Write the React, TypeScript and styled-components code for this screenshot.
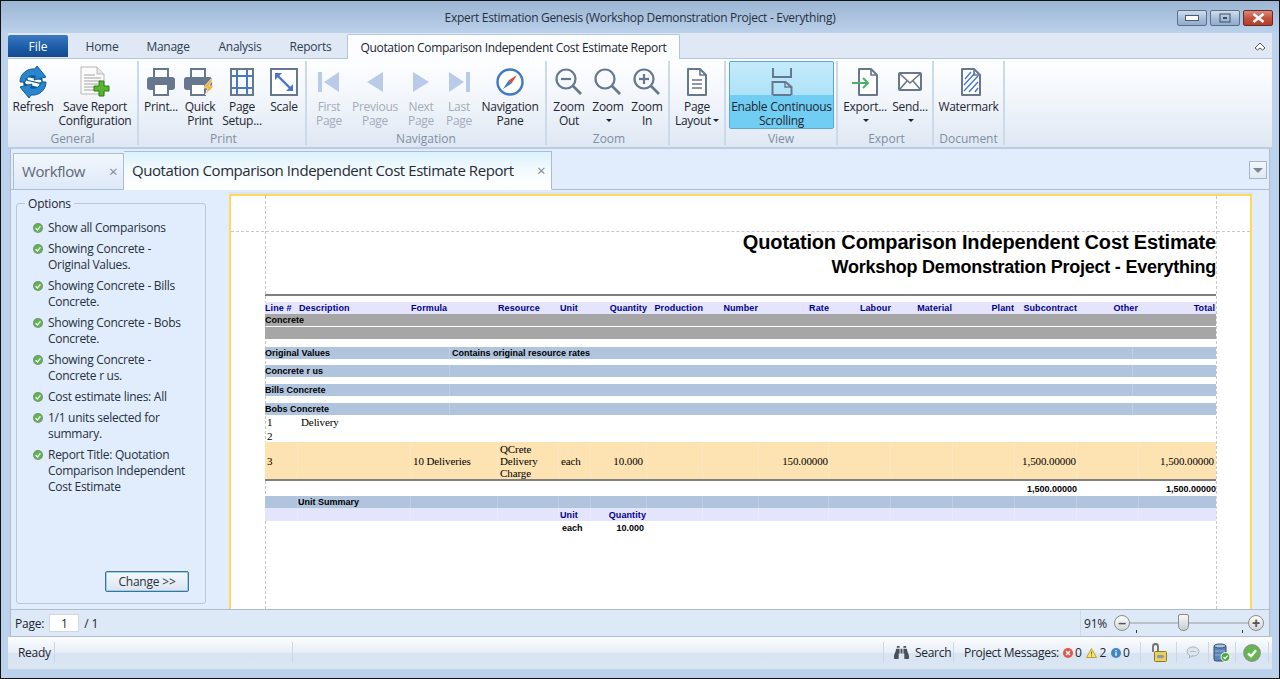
import { ReactNode } from 'react';
import styled, { createGlobalStyle } from 'styled-components';
import { FaBinoculars } from 'react-icons/fa';

const SLATE = '#67778d';
const BLUE = '#4a76c6';
const DIM = '#b9cbe8';

const GlobalStyle = createGlobalStyle`
  html, body { margin: 0; padding: 0; background: #000; }
  body { font-family: "Open Sans", "Noto Sans", sans-serif; font-size: 12px; color: #1e2530; }
  * { box-sizing: border-box; }
`;

const Window = styled.div`
  width: 1280px;
  height: 679px;
  border: 1px solid #111;
  background: #bcd2ec;
  display: flex;
  flex-direction: column;
  overflow: hidden;
`;

const TitleBar = styled.div`
  height: 32px;
  flex: none;
  position: relative;
  display: flex;
  align-items: center;
  justify-content: center;
  background: linear-gradient(#9bb5d3, #bbd1eb);
  font-size: 12px;
  letter-spacing: -0.3px;
  color: #26303c;
`;

const WindowControls = styled.div`
  position: absolute;
  right: 6px;
  top: 9px;
  display: flex;
  gap: 3px;
`;

const WinButton = styled.div<{ $close?: boolean }>`
  width: 30px;
  height: 16px;
  border: 1px solid ${(p) => (p.$close ? '#6d2a22' : '#5d6f86')};
  border-radius: 2px;
  display: flex;
  align-items: center;
  justify-content: center;
  background: ${(p) =>
    p.$close
      ? 'linear-gradient(#d98a7c, #c5523f 50%, #b33c2b)'
      : 'linear-gradient(#cfdeef, #a9c0dc 50%, #8fabcd)'};
`;

const Content = styled.div`
  flex: 1;
  min-height: 0;
  padding: 0 7px 8px;
  display: flex;
  flex-direction: column;
`;

const TabRow = styled.div`
  height: 26px;
  flex: none;
  display: flex;
  align-items: flex-end;
  position: relative;
  background: #dfe8f4;
  border-bottom: 1px solid #b4c6dc;
`;

const FileTab = styled.div`
  width: 60px;
  height: 22px;
  margin-bottom: 1px;
  border-radius: 2px 2px 0 0;
  background: linear-gradient(#3c79c0, #1c5ca8 55%, #14498e);
  color: #fff;
  display: flex;
  align-items: center;
  justify-content: center;
`;

const MenuTab = styled.div<{ $w: number; $shift?: number }>`
  width: ${(p) => p.$w}px;
  height: 24px;
  padding-right: ${(p) => p.$shift || 0}px;
  display: flex;
  align-items: center;
  justify-content: center;
  letter-spacing: -0.25px;
  color: #2d3d52;
`;

const ActiveMenuTab = styled.div`
  width: 333px;
  height: 25px;
  margin-bottom: -1px;
  border: 1px solid #b4c6dc;
  border-bottom: none;
  border-radius: 2px 2px 0 0;
  background: #fbfdff;
  display: flex;
  align-items: center;
  justify-content: center;
  letter-spacing: -0.33px;
`;

const Collapse = styled.div`
  position: absolute;
  right: 6px;
  top: 7px;
  width: 12px;
  height: 12px;
`;

const Ribbon = styled.div`
  height: 90px;
  flex: none;
  display: flex;
  background: linear-gradient(#fdfeff, #f2f6fb 45%, #dee7f3);
  border-bottom: 2px solid #bccce0;
`;

const Group = styled.div<{ $w: number; $pad?: number }>`
  width: ${(p) => p.$w}px;
  margin-top: 2px;
  margin-bottom: 2px;
  padding-left: ${(p) => p.$pad || 0}px;
  border-right: 2px solid #ccd9e9;
  display: flex;
  flex-direction: column;
`;

const GroupButtons = styled.div`
  height: 68px;
  display: flex;
`;

const GroupLabel = styled.div`
  height: 14px;
  margin-top: 3px;
  line-height: 14px;
  text-align: center;
  color: #7f8ea3;
`;

const RibbonButton = styled.div<{ $w: number; $on?: boolean; $off?: boolean }>`
  width: ${(p) => p.$w}px;
  height: 68px;
  padding-top: 3px;
  display: flex;
  flex-direction: column;
  align-items: center;
  text-align: center;
  line-height: 14px;
  letter-spacing: -0.28px;
  white-space: nowrap;
  color: ${(p) => (p.$off ? '#a4acb8' : '#1e2530')};
  ${(p) =>
    p.$on &&
    `
    border: 1px solid #5ba8d4;
    border-radius: 2px;
    background: linear-gradient(#c4ebfb, #aee2f8 50%, #72cdf3 50%, #72cdf3);
    padding-top: 2px;
    margin-left: 3px;
  `}
`;

const IconSlot = styled.div`
  height: 36px;
  flex: none;
  display: flex;
  align-items: center;
  justify-content: center;
`;

const ButtonLabel = styled.div`
  line-height: 14px;
`;

const Caret = styled.span`
  display: inline-block;
  width: 0;
  height: 0;
  margin: 0 0 2px 2px;
  vertical-align: middle;
  border-left: 3px solid transparent;
  border-right: 3px solid transparent;
  border-top: 3px solid #222;
`;

const DocArea = styled.div`
  flex: 1;
  min-height: 0;
  margin: 0 2px;
  border-left: 1px solid #aebccd;
  border-right: 1px solid #aebccd;
  background: #e1edfd;
  display: flex;
  flex-direction: column;
`;

const DocTabs = styled.div`
  height: 41px;
  flex: none;
  padding: 2px 0 0 2px;
  display: flex;
  align-items: flex-end;
  position: relative;
  border-bottom: 1px solid #aebccd;
`;

const DocTab = styled.div<{ $active?: boolean; $w: number }>`
  width: ${(p) => p.$w}px;
  height: ${(p) => (p.$active ? 39 : 37)}px;
  margin-bottom: -1px;
  padding: 0 3px 2px 8px;
  display: flex;
  align-items: center;
  justify-content: space-between;
  white-space: nowrap;
  font-size: 15px;
  letter-spacing: -0.43px;
  color: ${(p) => (p.$active ? '#252c36' : '#5f6975')};
  border: 1px solid #aebccd;
  border-bottom: ${(p) => (p.$active ? '1px solid #fff' : '1px solid #aebccd')};
  border-left: ${(p) => (p.$active ? 'none' : '1px solid #aebccd')};
  background: ${(p) =>
    p.$active ? 'linear-gradient(#dcf2fc, #f6fbfe 55%, #fff)' : 'linear-gradient(#f2f7fd, #dde9f8)'};
`;

const CloseMark = styled.span`
  width: 14px;
  text-align: center;
  font-size: 15px;
  color: #7d8895;
`;

const TabMenu = styled.div`
  position: absolute;
  right: 2px;
  top: 12px;
  width: 18px;
  height: 18px;
  border: 1px solid #a8b5c4;
  background: linear-gradient(#f3f7fc, #dfe8f3);
  display: flex;
  align-items: center;
  justify-content: center;

  &::after {
    content: '';
    border-left: 5px solid transparent;
    border-right: 5px solid transparent;
    border-top: 5px solid #7b8794;
  }
`;

const Main = styled.div`
  flex: 1;
  min-height: 0;
  display: flex;
  padding: 4px 17px 0 5px;
  gap: 23px;
`;

const OptionsBox = styled.div`
  width: 190px;
  height: 401px;
  margin-top: 9px;
  flex: none;
  position: relative;
  padding: 16px 10px 12px 16px;
  border: 1px solid #bac7d6;
  border-radius: 3px;
  display: flex;
  flex-direction: column;
  gap: 5px;
`;

const OptionsLegend = styled.div`
  position: absolute;
  left: 8px;
  top: -8px;
  padding: 0 3px;
  line-height: 16px;
  background: #e1edfd;
  letter-spacing: -0.2px;
`;

const OptionItem = styled.div`
  display: flex;
  gap: 5px;
  line-height: 16px;
  letter-spacing: -0.28px;
  color: #27303c;

  svg {
    flex: none;
    margin-top: 3px;
  }
`;

const ChangeButton = styled.button`
  position: absolute;
  right: 16px;
  bottom: 11px;
  width: 84px;
  height: 21px;
  padding: 0;
  border: 1px solid #4a6f8e;
  border-radius: 2px;
  background: linear-gradient(#f4f8fc, #dbe5f0);
  box-shadow: inset 0 0 0 1px #8fd3f2;
  font: inherit;
  letter-spacing: -0.2px;
  color: #27303c;
`;

const Page = styled.div`
  flex: 1;
  min-width: 0;
  position: relative;
  overflow: hidden;
  padding: 34px 34px 0;
  border: 2px solid #ffd95c;
  border-bottom: none;
  background: #fff;
  box-shadow: 0 -2px 0 #d9e4f6;
`;

const MarginV = styled.div<{ $side: 'left' | 'right' }>`
  position: absolute;
  top: 0;
  bottom: 0;
  ${(p) => p.$side}: ${(p) => (p.$side === 'left' ? 34 : 33)}px;
  border-left: 1px dashed #c8c8c8;
`;

const MarginH = styled.div`
  position: absolute;
  left: 0;
  right: 0;
  top: 35px;
  border-top: 1px dashed #c8c8c8;
`;

const ReportTitle = styled.div`
  position: relative;
  height: 24px;
  text-align: right;
  font: bold 20px/24px "Liberation Sans", Arial, sans-serif;
  letter-spacing: -0.15px;
  color: #000;
`;

const ReportSubtitle = styled.div`
  position: relative;
  margin-top: 3px;
  text-align: right;
  font: bold 18px/20px "Liberation Sans", Arial, sans-serif;
  letter-spacing: -0.24px;
  color: #000;
`;

const Rule = styled.div<{ $top?: number }>`
  position: relative;
  height: 2px;
  margin-top: ${(p) => p.$top || 0}px;
  background: #7f7f7f;
`;

const COLUMNS = '33px 113px 87px 61px 32px 56px 56px 56px 70px 62px 62px 62px 62px 62px 78px';
const BANDS = '185px 683px 84px';

const Row = styled.div<{ $cols?: string; $h: number; $bg?: string; $gap?: number }>`
  position: relative;
  display: grid;
  grid-template-columns: ${(p) => p.$cols || COLUMNS};
  height: ${(p) => p.$h}px;
  margin-top: ${(p) => p.$gap || 0}px;
  background: ${(p) => p.$bg || 'transparent'};
`;

const Cell = styled.div<{ $right?: boolean; $pad?: number; $line?: boolean; $kind?: 'head' | 'bold' | 'serif' }>`
  display: flex;
  align-items: center;
  justify-content: ${(p) => (p.$right ? 'flex-end' : 'flex-start')};
  padding: ${(p) => (p.$right ? `0 ${p.$pad || 0}px 0 0` : `0 0 0 ${p.$pad || 0}px`)};
  white-space: nowrap;
  min-width: 0;
  border-right: ${(p) => (p.$line ? '1px solid rgba(255, 255, 255, 0.18)' : 'none')};
  color: ${(p) => (p.$kind === 'head' ? '#00008b' : '#000')};
  font: ${(p) =>
    p.$kind === 'serif'
      ? '11px/12px "Liberation Serif", "Times New Roman", serif'
      : 'bold 9px/12px "Liberation Sans", Arial, sans-serif'};
  letter-spacing: ${(p) => (p.$kind === 'head' ? '0.1px' : p.$kind === 'serif' ? '-0.1px' : '0')};
`;

const StackedText = styled.div`
  white-space: nowrap;
`;

const PageBar = styled.div`
  height: 28px;
  flex: none;
  display: flex;
  align-items: center;
  padding: 0 5px 0 4px;
  border-top: 1px solid #aebccd;
  border-bottom: 1px solid #aebccd;
  background: #dde9f7;
  letter-spacing: -0.2px;
`;

const PageInput = styled.div`
  width: 30px;
  height: 18px;
  margin: 0 5px;
  border: 1px solid #cdd8e5;
  background: #fff;
  display: flex;
  align-items: center;
  justify-content: center;
`;

const ZoomWrap = styled.div`
  margin-left: auto;
  height: 100%;
  display: flex;
  align-items: center;
  border-left: 1px solid #cdd9e8;
  padding-left: 3px;
`;

const ZoomLabel = styled.div`
  width: 30px;
`;

const ZoomCircle = styled.div`
  width: 16px;
  height: 16px;
  flex: none;
  border: 1px solid #8c8c8c;
  border-radius: 50%;
  background: linear-gradient(#fdfdfd, #d3d6da);
  display: flex;
  align-items: center;
  justify-content: center;
  font: bold 14px/14px "Liberation Sans", Arial, sans-serif;
  color: #555;
`;

const ZoomTrack = styled.div`
  width: 118px;
  height: 2px;
  position: relative;
  background: #b9c2cc;
`;

const ZoomThumb = styled.div`
  position: absolute;
  left: 48px;
  top: -8px;
  width: 11px;
  height: 17px;
  border: 1px solid #8c8c8c;
  border-radius: 2px 2px 5px 5px;
  background: linear-gradient(#f8f8f8, #c9ccd0);
`;

const ZoomTick = styled.div<{ $left: number }>`
  position: absolute;
  left: ${(p) => p.$left}px;
  top: 8px;
  width: 1px;
  height: 3px;
  background: #333;
`;

const StatusBar = styled.div`
  height: 33px;
  flex: none;
  display: flex;
  align-items: stretch;
  padding: 2px 3px 3px 0;
  background: linear-gradient(#fcfdfe, #e7eef7 50%, #d8e4f2 50%, #dbe6f3);
  border-bottom: 1px solid #c5d5e8;
  letter-spacing: -0.3px;
`;

const StatusCell = styled.div<{ $w?: number; $grow?: boolean; $pad?: number; $center?: boolean; $gap?: number }>`
  width: ${(p) => (p.$w ? `${p.$w}px` : 'auto')};
  flex: ${(p) => (p.$grow ? 1 : 'none')};
  padding-left: ${(p) => p.$pad || 0}px;
  display: flex;
  align-items: center;
  justify-content: ${(p) => (p.$center ? 'center' : 'flex-start')};
  gap: ${(p) => p.$gap || 0}px;
  white-space: nowrap;
  border-right: 1px solid #ccd7e4;
  margin: 3px 0;
`;

const MessagesLabel = styled.span`
  margin-right: 4px;
`;

const Count = styled.span`
  margin: 0 5px 0 2px;
`;

function OkDot() {
  return (
    <svg width="10" height="10" viewBox="0 0 10 10">
      <circle cx="5" cy="5" r="5" fill="#7f8a80" />
      <circle cx="5" cy="5" r="4" fill="#58b848" />
      <path d="M2.6 5.2 4.4 7l3-3.6" fill="none" stroke="#fff" strokeWidth="1.4" />
    </svg>
  );
}

function Svg({ w = 28, h = 28, children }: { w?: number; h?: number; children: ReactNode }) {
  return (
    <svg width={w} height={h} viewBox={`0 0 ${w} ${h}`}>
      {children}
    </svg>
  );
}

const RefreshArrow = () => (
  <path
    d="M2 16C2 8 9 2 17 3l2-3 9 11-12 3 1.500-4C12 9 8 11 7 16Z"
    fill="#2a86cc"
    stroke="#0f5a98"
    strokeWidth="1"
    strokeLinejoin="round"
  />
);

const RefreshIcon = () => (
  <Svg w={30} h={32}>
    <ellipse cx="15" cy="16" rx="10" ry="10" fill="#0f5a98" />
    <path d="M6 14 22 18 20 21 8 18Z" fill="#fff" />
    <path d="M9 11 23 14 24 17 10 14Z" fill="#fff" />
    <RefreshArrow />
    <g transform="rotate(180 15 16)">
      <RefreshArrow />
    </g>
  </Svg>
);

const SaveIcon = () => (
  <Svg w={30} h={32}>
    <path d="M1 1h16l7 7v20H1Z" fill="#fbfbfb" stroke="#b8b8b8" />
    <path d="M17 1v7h7" fill="#e6e6e6" stroke="#b8b8b8" />
    <path d="M4 9h11M4 12h17M4 15h17M4 18h14M4 21h12M4 24h10" stroke="#a3a3a3" />
    <path d="M19 15h5v5h5v5h-5v5h-5v-5h-5v-5h5Z" fill="#58b52e" stroke="#2f7a16" />
  </Svg>
);

const PrintIcon = ({ bolt }: { bolt?: boolean }) => (
  <Svg w={bolt ? 32 : 28} h={28}>
    <rect x="7" y="1" width="14" height="10" fill="none" stroke={SLATE} strokeWidth="2" />
    <rect x="0" y="9" width="28" height="13" rx="3" fill={SLATE} />
    <rect x="7" y="16" width="14" height="11" fill="#fff" stroke={SLATE} strokeWidth="2" />
    {bolt && <path d="M27 11 19 20h5l-3 7 9-9h-5l4-7Z" fill="#f2b437" stroke="#fff" strokeWidth="0.6" />}
  </Svg>
);

const PageSetupIcon = () => (
  <Svg w={24} h={28}>
    <path d="M7 2v24M17 2v24M2 8h20M2 20h20" stroke={BLUE} strokeWidth="2" />
    <rect x="1" y="1" width="22" height="26" fill="none" stroke={SLATE} strokeWidth="2" />
  </Svg>
);

const ScaleIcon = () => (
  <Svg>
    <rect x="1" y="1" width="26" height="26" fill="#fff" stroke={SLATE} strokeWidth="2" />
    <path d="M8 8l12 12" stroke={BLUE} strokeWidth="2.4" />
    <path d="M5 5h7l-7 7ZM23 23h-7l7-7Z" fill={BLUE} />
  </Svg>
);

const NavIcon = ({ kind }: { kind: 'first' | 'prev' | 'next' | 'last' }) => (
  <Svg w={24} h={22}>
    {kind === 'first' && <path d="M1 1h4v20H1ZM22 1v20L7 11Z" fill={DIM} />}
    {kind === 'prev' && <path d="M20 1v20L4 11Z" fill={DIM} />}
    {kind === 'next' && <path d="M4 1v20l16-10Z" fill={DIM} />}
    {kind === 'last' && <path d="M19 1h4v20h-4ZM2 1v20l15-10Z" fill={DIM} />}
  </Svg>
);

const CompassIcon = () => (
  <Svg>
    <circle cx="14" cy="14" r="12.5" fill="#fff" stroke="#3f78c8" strokeWidth="2.4" />
    <path d="M21 7 15.500 15.500 12.500 12.500Z" fill="#e0473c" />
    <path d="M7 21 12.500 12.500 15.500 15.500Z" fill="#3f78c8" />
  </Svg>
);

const ZoomIcon = ({ mark }: { mark?: '-' | '+' }) => (
  <Svg>
    <circle cx="11" cy="11" r="9.5" fill="none" stroke={SLATE} strokeWidth="2.2" />
    <path d="M18 18l8 8" stroke={SLATE} strokeWidth="2.6" />
    {mark && <path d="M6 11h10" stroke={SLATE} strokeWidth="2.2" />}
    {mark === '+' && <path d="M11 6v10" stroke={SLATE} strokeWidth="2.2" />}
  </Svg>
);

const DocIcon = ({ children, w = 20 }: { children?: ReactNode; w?: number }) => (
  <Svg w={w} h={28}>
    <path
      d={`M${w - 19} 1h12l6 6v20h-18Z`}
      fill="#fff"
      stroke={SLATE}
      strokeWidth="2"
      strokeLinejoin="round"
    />
    <path d={`M${w - 7} 1v6h6`} fill="none" stroke={SLATE} strokeWidth="1.6" />
    {children}
  </Svg>
);

const ContinuousIcon = () => (
  <Svg w={22} h={28}>
    <path d="M2 0v9h18V0" fill="none" stroke={SLATE} strokeWidth="2" />
    <path d="M1.500 27V14h13l6 5v8" fill="none" stroke={SLATE} strokeWidth="2" />
    <path d="M2 27h18" stroke={SLATE} strokeWidth="2" />
    <path d="M14 14v5h6" fill="none" stroke={SLATE} strokeWidth="1.4" />
  </Svg>
);

const MailIcon = () => (
  <Svg w={24} h={20}>
    <rect x="1" y="1" width="22" height="17" rx="1" fill="#fff" stroke={SLATE} strokeWidth="2" />
    <path d="M2 2l10 9 10-9M2 17l7-8M22 17l-7-8" fill="none" stroke={SLATE} strokeWidth="1.6" />
  </Svg>
);

const Minimize = () => <svg width="14" height="6"><rect x="0.5" y="0.5" width="13" height="5" fill="#fff" stroke="#4d5c70" /></svg>;
const Restore = () => <svg width="12" height="10"><rect x="1" y="1" width="10" height="8" fill="none" stroke="#3e4c5e" /><rect x="4" y="4" width="4" height="2" fill="#3e4c5e" /></svg>;
const CloseGlyph = () => (
  <svg width="13" height="10">
    <path d="M1.500 1l10 8M11.500 1l-10 8" stroke="#fff" strokeWidth="2.6" />
  </svg>
);

const LockIcon = () => (
  <Svg w={16} h={19}>
    <path d="M2 9V3.500a2.500 2.500 0 0 1 5 0V9" fill="none" stroke="#6d6d6d" strokeWidth="1.8" />
    <rect x="3.500" y="8.500" width="12" height="10" rx="1" fill="#ecd25a" stroke="#8d7a24" />
    <ellipse cx="9.500" cy="13.500" rx="3.800" ry="1.800" fill="#8a9bb0" />
  </Svg>
);

const ChatIcon = () => (
  <Svg w={14} h={13}>
    <ellipse cx="7" cy="5.500" rx="6" ry="4.600" fill="#dfe5ec" stroke="#a8b2bd" />
    <path d="M3.500 9v3l3-2.500" fill="#dfe5ec" stroke="#a8b2bd" />
    <path d="M4 5.500h6" stroke="#b5bec8" />
  </Svg>
);

const DbIcon = () => (
  <Svg w={18} h={20}>
    <rect x="1" y="2" width="12" height="16" rx="2" fill="#5b84b8" stroke="#35506f" />
    <ellipse cx="7" cy="3" rx="6" ry="2" fill="#aac2dd" stroke="#35506f" />
    <path d="M2 8h10M2 12h10" stroke="#8fb0d3" />
    <circle cx="12.500" cy="14" r="4.500" fill="#4ea83a" stroke="#fff" />
    <path d="M10.500 14l1.500 1.600 2.600-3" fill="none" stroke="#fff" strokeWidth="1.3" />
  </Svg>
);

const BigCheck = () => (
  <Svg w={18} h={18}>
    <circle cx="9" cy="9" r="8.200" fill="#62b84c" stroke="#8b948b" strokeWidth="1.400" />
    <path d="M5 9.400 8 12.200l5-6" fill="none" stroke="#fff" strokeWidth="2.400" />
  </Svg>
);

const StatusDot = ({ bg, mark }: { bg: string; mark: 'x' | 'i' }) => (
  <svg width="10" height="10" viewBox="0 0 10 10">
    <circle cx="5" cy="5" r="5" fill={bg} />
    {mark === 'x' ? (
      <path d="M3 3l4 4M7 3l-4 4" stroke="#fff" strokeWidth="1.4" />
    ) : (
      <path d="M5 2v1.200M5 4.200v3.600" stroke="#fff" strokeWidth="1.4" />
    )}
  </svg>
);

const WarnDot = () => (
  <svg width="11" height="10" viewBox="0 0 11 10">
    <path d="M5.500.5 10.500 9.500H.5Z" fill="#f7e27a" stroke="#bfa22b" />
    <path d="M5.500 3.500v3M5.500 7.400v1" stroke="#7a6a1c" />
  </svg>
);

const options = [
  ['Show all Comparisons'],
  ['Showing Concrete -', 'Original Values.'],
  ['Showing Concrete - Bills', 'Concrete.'],
  ['Showing Concrete - Bobs', 'Concrete.'],
  ['Showing Concrete -', 'Concrete r us.'],
  ['Cost estimate lines: All'],
  ['1/1 units selected for', 'summary.'],
  ['Report Title: Quotation', 'Comparison Independent', 'Cost Estimate'],
];

const headers: [string, boolean, number?][] = [
  ['Line #', false],
  ['Description', false, 1],
  ['Formula', false],
  ['Resource', false],
  ['Unit', false, 1],
  ['Quantity', true],
  ['Production', true],
  ['Number', true, 1],
  ['Rate', true],
  ['Labour', true],
  ['Material', true, 1],
  ['Plant', true, 1],
  ['Subcontract', true],
  ['Other', true, 1],
  ['Total', true, 2],
];

const ruledCells = (n: number) =>
  Array.from({ length: n }, (_, i) => <Cell key={`r${i}`} $line />);

const emptyCells = (n: number) =>
  Array.from({ length: n }, (_, i) => <Cell key={`e${i}`} />);

function HeaderRow() {
  return (
    <Row $h={12} $bg="#e4e4fc" $gap={6}>
      {headers.map(([label, right, pad]) => (
        <Cell key={label} $kind="head" $right={right} $pad={pad}>
          {label}
        </Cell>
      ))}
    </Row>
  );
}

function BandRow({ label, note, gap }: { label: string; note?: string; gap: number }) {
  return (
    <Row $cols={BANDS} $h={12} $bg="#b0c4de" $gap={gap}>
      <Cell $line>{label}</Cell>
      <Cell $line $pad={2}>{note}</Cell>
      <Cell />
    </Row>
  );
}

export default function App() {
  return (
    <Window>
      <GlobalStyle />
      <TitleBar>
        Expert Estimation Genesis (Workshop Demonstration Project - Everything)
        <WindowControls>
          <WinButton><Minimize /></WinButton>
          <WinButton><Restore /></WinButton>
          <WinButton $close><CloseGlyph /></WinButton>
        </WindowControls>
      </TitleBar>
      <Content>
        <TabRow>
          <FileTab>File</FileTab>
          <MenuTab $w={68}>Home</MenuTab>
          <MenuTab $w={64}>Manage</MenuTab>
          <MenuTab $w={80}>Analysis</MenuTab>
          <MenuTab $w={67} $shift={6}>Reports</MenuTab>
          <ActiveMenuTab>Quotation Comparison Independent Cost Estimate Report</ActiveMenuTab>
          <Collapse>
            <svg width="12" height="12" viewBox="0 0 12 12">
              <path d="M1 7 6 2l5 5-2.500 2L6 7 3.500 9Z" fill="#fff" stroke="#555" />
            </svg>
          </Collapse>
        </TabRow>
        <Ribbon>
          <Group $w={131}>
            <GroupButtons>
              <RibbonButton $w={50}><IconSlot><RefreshIcon /></IconSlot><ButtonLabel>Refresh</ButtonLabel></RibbonButton>
              <RibbonButton $w={74}><IconSlot><SaveIcon /></IconSlot><ButtonLabel>Save Report<br />Configuration</ButtonLabel></RibbonButton>
            </GroupButtons>
            <GroupLabel>General</GroupLabel>
          </Group>
          <Group $w={168} $pad={3}>
            <GroupButtons>
              <RibbonButton $w={38}><IconSlot><PrintIcon /></IconSlot><ButtonLabel>Print...</ButtonLabel></RibbonButton>
              <RibbonButton $w={40}><IconSlot><PrintIcon bolt /></IconSlot><ButtonLabel>Quick<br />Print</ButtonLabel></RibbonButton>
              <RibbonButton $w={44}><IconSlot><PageSetupIcon /></IconSlot><ButtonLabel>Page<br />Setup...</ButtonLabel></RibbonButton>
              <RibbonButton $w={40}><IconSlot><ScaleIcon /></IconSlot><ButtonLabel>Scale</ButtonLabel></RibbonButton>
            </GroupButtons>
            <GroupLabel>Print</GroupLabel>
          </Group>
          <Group $w={240}>
            <GroupButtons>
              <RibbonButton $w={44} $off><IconSlot><NavIcon kind="first" /></IconSlot><ButtonLabel>First<br />Page</ButtonLabel></RibbonButton>
              <RibbonButton $w={48} $off><IconSlot><NavIcon kind="prev" /></IconSlot><ButtonLabel>Previous<br />Page</ButtonLabel></RibbonButton>
              <RibbonButton $w={44} $off><IconSlot><NavIcon kind="next" /></IconSlot><ButtonLabel>Next<br />Page</ButtonLabel></RibbonButton>
              <RibbonButton $w={32} $off><IconSlot><NavIcon kind="last" /></IconSlot><ButtonLabel>Last<br />Page</ButtonLabel></RibbonButton>
              <RibbonButton $w={70}><IconSlot><CompassIcon /></IconSlot><ButtonLabel>Navigation<br />Pane</ButtonLabel></RibbonButton>
            </GroupButtons>
            <GroupLabel>Navigation</GroupLabel>
          </Group>
          <Group $w={123} $pad={3}>
            <GroupButtons>
              <RibbonButton $w={38}><IconSlot><ZoomIcon mark="-" /></IconSlot><ButtonLabel>Zoom<br />Out</ButtonLabel></RibbonButton>
              <RibbonButton $w={40}><IconSlot><ZoomIcon /></IconSlot><ButtonLabel>Zoom<br /><Caret /></ButtonLabel></RibbonButton>
              <RibbonButton $w={38}><IconSlot><ZoomIcon mark="+" /></IconSlot><ButtonLabel>Zoom<br />In</ButtonLabel></RibbonButton>
            </GroupButtons>
            <GroupLabel>Zoom</GroupLabel>
          </Group>
          <Group $w={56}>
            <GroupButtons>
              <RibbonButton $w={54}>
                <IconSlot>
                  <DocIcon>
                    <path d="M5 12h10M5 16h10M5 20h10" stroke={SLATE} strokeWidth="1.6" />
                  </DocIcon>
                </IconSlot>
                <ButtonLabel>Page<br />Layout<Caret /></ButtonLabel>
              </RibbonButton>
            </GroupButtons>
          </Group>
          <Group $w={112}>
            <GroupButtons>
              <RibbonButton $w={105} $on><IconSlot><ContinuousIcon /></IconSlot><ButtonLabel>Enable Continuous<br />Scrolling</ButtonLabel></RibbonButton>
            </GroupButtons>
            <GroupLabel>View</GroupLabel>
          </Group>
          <Group $w={96} $pad={3}>
            <GroupButtons>
              <RibbonButton $w={48}>
                <IconSlot>
                  <DocIcon w={26}>
                    <path d="M0 15h16M11 10l5 5-5 5" fill="none" stroke="#45b36b" strokeWidth="2" />
                  </DocIcon>
                </IconSlot>
                <ButtonLabel>Export...<br /><Caret /></ButtonLabel>
              </RibbonButton>
              <RibbonButton $w={42}><IconSlot><MailIcon /></IconSlot><ButtonLabel>Send...<br /><Caret /></ButtonLabel></RibbonButton>
            </GroupButtons>
            <GroupLabel>Export</GroupLabel>
          </Group>
          <Group $w={71}>
            <GroupButtons>
              <RibbonButton $w={69}>
                <IconSlot>
                  <DocIcon w={24}>
                    <path d="M8 11l6-7M7 17l11-12M7 23 21 8M12 24l9-10M18 24l3-4" stroke={BLUE} strokeWidth="1.4" />
                  </DocIcon>
                </IconSlot>
                <ButtonLabel>Watermark</ButtonLabel>
              </RibbonButton>
            </GroupButtons>
            <GroupLabel>Document</GroupLabel>
          </Group>
        </Ribbon>
        <DocArea>
          <DocTabs>
            <DocTab $w={111}>Workflow<CloseMark>×</CloseMark></DocTab>
            <DocTab $w={428} $active>
              Quotation Comparison Independent Cost Estimate Report<CloseMark>×</CloseMark>
            </DocTab>
            <TabMenu />
          </DocTabs>
          <Main>
            <OptionsBox>
              <OptionsLegend>Options</OptionsLegend>
              {options.map((lines) => (
                <OptionItem key={lines.join()}>
                  <OkDot />
                  <div>
                    {lines.map((line) => (
                      <div key={line}>{line}</div>
                    ))}
                  </div>
                </OptionItem>
              ))}
              <ChangeButton>Change &gt;&gt;</ChangeButton>
            </OptionsBox>
            <Page>
              <MarginV $side="left" />
              <MarginV $side="right" />
              <MarginH />
              <ReportTitle>Quotation Comparison Independent Cost Estimate</ReportTitle>
              <ReportSubtitle>Workshop Demonstration Project - Everything</ReportSubtitle>
              <Rule $top={17} />
              <HeaderRow />
              <Row $cols="1fr" $h={12} $bg="#a6a6a6"><Cell>Concrete</Cell></Row>
              <Row $cols="1fr" $h={12} $bg="#a6a6a6" $gap={1} />
              <BandRow label="Original Values" note="Contains original resource rates" gap={8} />
              <BandRow label="Concrete r us" gap={6} />
              <BandRow label="Bills Concrete" gap={7} />
              <BandRow label="Bobs Concrete" gap={7} />
              <Row $h={14}>
                <Cell $kind="serif" $pad={2}>1</Cell>
                <Cell $kind="serif" $pad={3}>Delivery</Cell>
              </Row>
              <Row $h={13}><Cell $kind="serif" $pad={2}>2</Cell></Row>
              <Row $h={37} $bg="#fde2b2">
                <Cell $kind="serif" $pad={2} $line>3</Cell>
                <Cell $line />
                <Cell $kind="serif" $pad={2} $line>10 Deliveries</Cell>
                <Cell $kind="serif" $pad={2} $line>
                  <StackedText>QCrete<br />Delivery<br />Charge</StackedText>
                </Cell>
                <Cell $kind="serif" $pad={2} $line>each</Cell>
                <Cell $kind="serif" $right $pad={3} $line>10.000</Cell>
                <Cell $line />
                <Cell $line />
                <Cell $kind="serif" $right $line>150.00000</Cell>
                <Cell $line />
                <Cell $line />
                <Cell $line />
                <Cell $kind="serif" $right $line>1,500.00000</Cell>
                <Cell $line />
                <Cell $kind="serif" $right $pad={3}>1,500.00000</Cell>
              </Row>
              <Rule />
              <Row $h={15}>
                {emptyCells(12)}
                <Cell $right>1,500.00000</Cell>
                <Cell />
                <Cell $right $pad={1}>1,500.00000</Cell>
              </Row>
              <Row $h={12} $bg="#b0c4de">
                <Cell $line />
                <Cell $line>Unit Summary</Cell>
                {ruledCells(13)}
              </Row>
              <Row $h={13} $bg="#e4e4fc">
                {ruledCells(4)}
                <Cell $kind="head" $line $pad={1}>Unit</Cell>
                <Cell $kind="head" $right $line>Quantity</Cell>
                {ruledCells(9)}
              </Row>
              <Row $h={13}>
                {emptyCells(4)}
                <Cell $pad={3}>each</Cell>
                <Cell $right $pad={3}>10.000</Cell>
              </Row>
            </Page>
          </Main>
          <PageBar>
            Page:
            <PageInput>1</PageInput>
            / 1
            <ZoomWrap>
              <ZoomLabel>91%</ZoomLabel>
              <ZoomCircle>–</ZoomCircle>
              <ZoomTrack>
                <ZoomTick $left={6} />
                <ZoomTick $left={112} />
                <ZoomThumb />
              </ZoomTrack>
              <ZoomCircle>+</ZoomCircle>
            </ZoomWrap>
          </PageBar>
        </DocArea>
        <StatusBar>
          <StatusCell $w={47} $pad={10}>Ready</StatusCell>
          <StatusCell $w={238} />
          <StatusCell $grow />
          <StatusCell $w={70} $pad={10} $gap={6}>
            <FaBinoculars size={15} color="#4a4f57" /> Search
          </StatusCell>
          <StatusCell $w={187} $pad={10}>
            <MessagesLabel>Project Messages:</MessagesLabel>
            <StatusDot bg="#e0544a" mark="x" />
            <Count>0</Count>
            <WarnDot />
            <Count>2</Count>
            <StatusDot bg="#3f86c9" mark="i" />
            <Count>0</Count>
          </StatusCell>
          <StatusCell $w={36} $center><LockIcon /></StatusCell>
          <StatusCell $w={32} $center><ChatIcon /></StatusCell>
          <StatusCell $w={27} $center><DbIcon /></StatusCell>
          <StatusCell $w={33} $center><BigCheck /></StatusCell>
        </StatusBar>
      </Content>
    </Window>
  );
}
